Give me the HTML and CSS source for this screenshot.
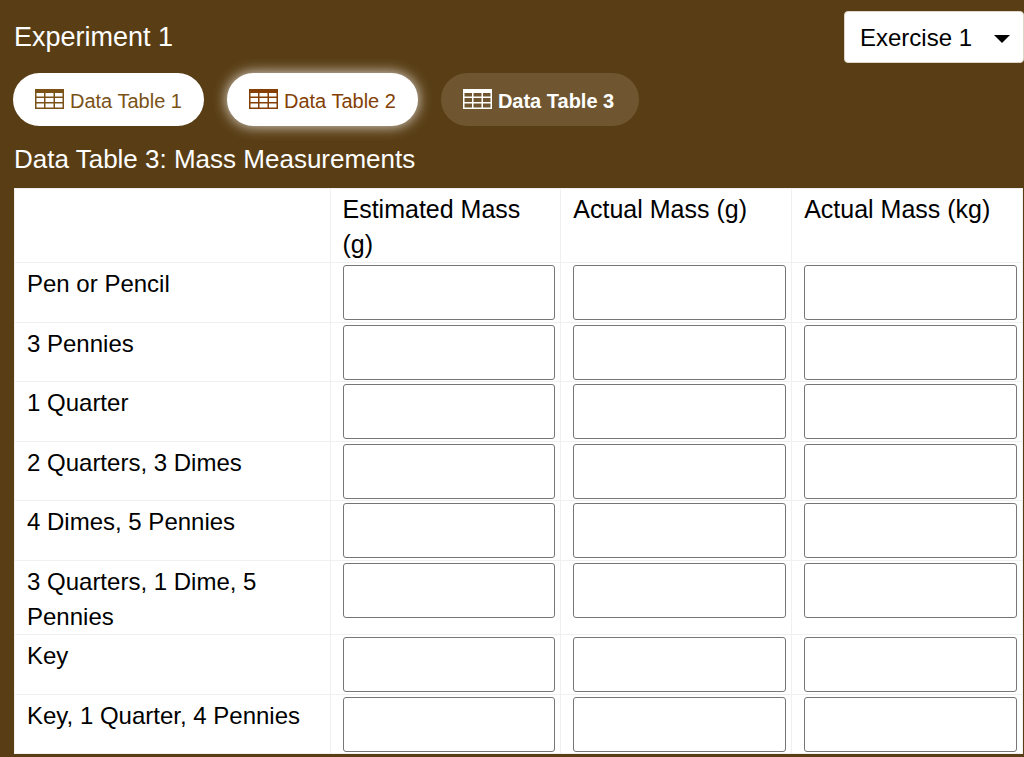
FILE: index.html
```html
<!DOCTYPE html>
<html lang="en">
<head>
    <meta charset="UTF-8">
    <meta name="viewport" content="width=device-width, initial-scale=1.0">
    <title>Experiment 1</title>
    <link rel="stylesheet" href="styles.css">
</head>
<body>

<svg class="sprite" aria-hidden="true">
    <symbol id="table-icon" viewBox="0 0 29 20">
        <path fill="currentColor" fill-rule="evenodd" d="M0 0H29V20H0ZM1.5 4V7.5H9V4ZM10.5 4V7.5H18.5V4ZM20 4V7.5H27.5V4ZM1.5 9V13H9V9ZM10.5 9V13H18.5V9ZM20 9V13H27.5V9ZM1.5 14.5V18.5H9V14.5ZM10.5 14.5V18.5H18.5V14.5ZM20 14.5V18.5H27.5V14.5Z"/>
    </symbol>
</svg>

<header>
    <h1>Experiment 1</h1>
    <div class="exercise">
        <select id="exercise" name="exercise" aria-label="Exercise">
            <option value="1">Exercise 1</option>
        </select>
    </div>
</header>

<nav class="tabs">
    <button type="button" class="tab"><svg><use href="#table-icon"/></svg>Data Table 1</button>
    <button type="button" class="tab glow"><svg><use href="#table-icon"/></svg>Data Table 2</button>
    <button type="button" class="tab active"><svg><use href="#table-icon"/></svg>Data Table 3</button>
</nav>

<h2 id="tableTitle">Data Table 3: Mass Measurements</h2>

<table aria-labelledby="tableTitle">
    <thead>
        <tr>
            <td class="item"></td>
            <th scope="col">Estimated Mass (g)</th>
            <th scope="col">Actual Mass (g)</th>
            <th scope="col">Actual Mass (kg)</th>
        </tr>
    </thead>
    <tbody>
        <tr>
            <th scope="row">Pen or Pencil</th>
            <td><input type="text" name="pen_est" aria-label="Pen or Pencil, estimated mass in g"></td>
            <td><input type="text" name="pen_g" aria-label="Pen or Pencil, actual mass in g"></td>
            <td><input type="text" name="pen_kg" aria-label="Pen or Pencil, actual mass in kg"></td>
        </tr>
        <tr>
            <th scope="row">3 Pennies</th>
            <td><input type="text" name="pennies_est" aria-label="3 Pennies, estimated mass in g"></td>
            <td><input type="text" name="pennies_g" aria-label="3 Pennies, actual mass in g"></td>
            <td><input type="text" name="pennies_kg" aria-label="3 Pennies, actual mass in kg"></td>
        </tr>
        <tr>
            <th scope="row">1 Quarter</th>
            <td><input type="text" name="quarter_est" aria-label="1 Quarter, estimated mass in g"></td>
            <td><input type="text" name="quarter_g" aria-label="1 Quarter, actual mass in g"></td>
            <td><input type="text" name="quarter_kg" aria-label="1 Quarter, actual mass in kg"></td>
        </tr>
        <tr>
            <th scope="row">2 Quarters, 3 Dimes</th>
            <td><input type="text" name="q2d3_est" aria-label="2 Quarters, 3 Dimes, estimated mass in g"></td>
            <td><input type="text" name="q2d3_g" aria-label="2 Quarters, 3 Dimes, actual mass in g"></td>
            <td><input type="text" name="q2d3_kg" aria-label="2 Quarters, 3 Dimes, actual mass in kg"></td>
        </tr>
        <tr>
            <th scope="row">4 Dimes, 5 Pennies</th>
            <td><input type="text" name="d4p5_est" aria-label="4 Dimes, 5 Pennies, estimated mass in g"></td>
            <td><input type="text" name="d4p5_g" aria-label="4 Dimes, 5 Pennies, actual mass in g"></td>
            <td><input type="text" name="d4p5_kg" aria-label="4 Dimes, 5 Pennies, actual mass in kg"></td>
        </tr>
        <tr>
            <th scope="row">3 Quarters, 1 Dime, 5 Pennies</th>
            <td><input type="text" name="q3d1p5_est" aria-label="3 Quarters, 1 Dime, 5 Pennies, estimated mass in g"></td>
            <td><input type="text" name="q3d1p5_g" aria-label="3 Quarters, 1 Dime, 5 Pennies, actual mass in g"></td>
            <td><input type="text" name="q3d1p5_kg" aria-label="3 Quarters, 1 Dime, 5 Pennies, actual mass in kg"></td>
        </tr>
        <tr>
            <th scope="row">Key</th>
            <td><input type="text" name="key_est" aria-label="Key, estimated mass in g"></td>
            <td><input type="text" name="key_g" aria-label="Key, actual mass in g"></td>
            <td><input type="text" name="key_kg" aria-label="Key, actual mass in kg"></td>
        </tr>
        <tr>
            <th scope="row">Key, 1 Quarter, 4 Pennies</th>
            <td><input type="text" name="keyq1p4_est" aria-label="Key, 1 Quarter, 4 Pennies, estimated mass in g"></td>
            <td><input type="text" name="keyq1p4_g" aria-label="Key, 1 Quarter, 4 Pennies, actual mass in g"></td>
            <td><input type="text" name="keyq1p4_kg" aria-label="Key, 1 Quarter, 4 Pennies, actual mass in kg"></td>
        </tr>
    </tbody>
</table>

</body>
</html>
```
FILE: styles.css
```css
* {
    box-sizing: border-box;
}
body {
    font-family: "Liberation Sans", Arial, sans-serif;
    background-color: #593e15;
    margin: 0;
    padding: 11px 1px 0 14px;
    color: #fff;
}
.sprite {
    display: none;
}
header {
    display: flex;
    justify-content: space-between;
    align-items: center;
    margin-right: -1px;
}
h1 {
    margin: 0;
    font-size: 27px;
    font-weight: 300;
}
.exercise {
    position: relative;
}
.exercise::after {
    content: "";
    position: absolute;
    right: 14px;
    top: 24px;
    border: 8px solid transparent;
    border-top-color: #000;
    border-bottom: none;
    pointer-events: none;
}
select {
    appearance: none;
    display: block;
    width: 180px;
    height: 52px;
    padding: 0 40px 0 15px;
    border: 1px solid #ddd5c8;
    border-radius: 4px;
    background: #fff;
    color: #000;
    font-family: inherit;
    font-size: 24px;
}
.tabs {
    display: flex;
    gap: 23px;
    margin: 10px 0 0 -1px;
}
.tab {
    display: flex;
    align-items: center;
    gap: 6px;
    height: 53px;
    padding: 4px 22px 0;
    border: none;
    border-radius: 27px;
    background: #fff;
    color: #7a5217;
    font-family: inherit;
    font-size: 20px;
    white-space: nowrap;
    cursor: pointer;
}
.tab svg {
    width: 29px;
    height: 20px;
    margin-bottom: 5px;
}
.tab.glow {
    color: #843f06;
    box-shadow: 0 0 14px rgba(255, 255, 255, 0.85);
}
.tab.active {
    padding-right: 25px;
    background: #6f5630;
    color: #fff;
    font-weight: bold;
}
h2 {
    margin: 18px 0 14px;
    font-size: 26px;
    line-height: 30px;
    font-weight: normal;
}
table {
    width: 100%;
    table-layout: fixed;
    border-collapse: collapse;
    background: #fff;
    color: #000;
    line-height: 35px;
}
th, td {
    border: 1px solid #f0f0f0;
    font-weight: normal;
    text-align: left;
    vertical-align: top;
}
th {
    padding: 3px 5px 0 12px;
    font-size: 25px;
}
tbody th {
    font-size: 24px;
}
td {
    padding: 2px 5px 2px 12px;
}
.item {
    width: 31.3%;
}
tbody tr:nth-child(even) td {
    padding-bottom: 1px;
}
input {
    display: block;
    width: 100%;
    height: 55px;
    padding: 0 8px;
    border: 1px solid #767676;
    border-radius: 3px;
    background: #fff;
    font-family: inherit;
    font-size: 24px;
}
input:focus {
    outline: none;
    border-color: #593e15;
}
```
